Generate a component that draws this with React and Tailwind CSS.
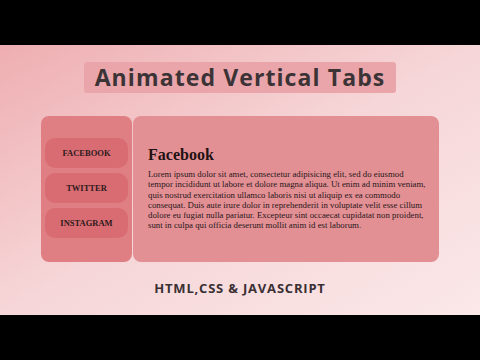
import { useState } from "react";

const tabs = [
  {
    id: "facebook",
    label: "FACEBOOK",
    title: "Facebook",
  },
  {
    id: "twitter",
    label: "TWITTER",
    title: "Twitter",
  },
  {
    id: "instagram",
    label: "INSTAGRAM",
    title: "Instagram",
  },
];

const lorem =
  "Lorem ipsum dolor sit amet, consectetur adipisicing elit, sed do eiusmod tempor incididunt ut labore et dolore magna aliqua. Ut enim ad minim veniam, quis nostrud exercitation ullamco laboris nisi ut aliquip ex ea commodo consequat. Duis aute irure dolor in reprehenderit in voluptate velit esse cillum dolore eu fugiat nulla pariatur. Excepteur sint occaecat cupidatat non proident, sunt in culpa qui officia deserunt mollit anim id est laborum.";

function App() {
  const [active, setActive] = useState("facebook");
  const current = tabs.find((tab) => tab.id === active);

  return (
    <div className="h-[360px] w-[480px] overflow-hidden bg-black pt-[45px]">
      <main className="flex h-[270px] flex-col items-center bg-gradient-to-br from-[#eeaeb1] via-[#f6d6d8] to-[#fbe8e9] pt-[17px]">
        <h1 className="flex h-[31px] w-[312px] items-center justify-center rounded-[3px] bg-[#e9a5a9] font-['Open_Sans',sans-serif] text-[23px] font-bold tracking-[1.1px] text-[#3b3336]">
          Animated Vertical Tabs
        </h1>

        <section className="mt-[23px] flex h-[146px] gap-px">
          <div className="flex w-[91px] flex-col gap-[5px] rounded-lg bg-[#e07f83] px-[4px] pt-[22px]">
            {tabs.map((tab) => (
              <button
                key={tab.id}
                type="button"
                onClick={() => setActive(tab.id)}
                className="h-[30px] rounded-[10px] bg-[#d96c72] font-['Liberation_Serif',serif] text-[8.5px] font-bold text-[#2e1a1c]"
              >
                {tab.label}
              </button>
            ))}
          </div>

          <div className="w-[306px] rounded-lg bg-[#e39095] pl-[15px] pr-[10px] pt-[29px] font-['Liberation_Serif',serif] text-[#2a1719]">
            <h2 className="text-[16px] font-bold leading-[20px] text-[#1f1213]">{current.title}</h2>
            <p className="mt-[4px] text-[8.8px] leading-[10.3px]">{lorem}</p>
          </div>
        </section>

        <p className="mt-[17px] font-['Open_Sans',sans-serif] text-[13px] font-bold tracking-[0.8px] text-[#3a3034]">
          HTML,CSS &amp; JAVASCRIPT
        </p>
      </main>
    </div>
  );
}

export default App;
